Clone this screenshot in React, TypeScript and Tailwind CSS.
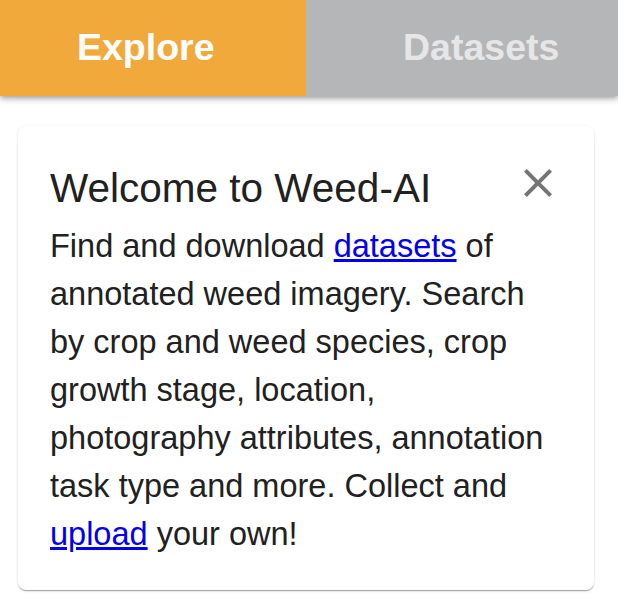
import React from "react";

const font = { fontFamily: '"Liberation Sans", Arial, sans-serif' };

function CloseIcon() {
  return (
    <svg viewBox="0 0 24 24" className="w-12 h-12" fill="#757575">
      <path d="M19 6.41 17.59 5 12 10.59 6.41 5 5 6.41 10.59 12 5 17.59 6.41 19 12 13.41 17.59 19 19 17.59 13.41 12z" />
    </svg>
  );
}

export default function App() {
  return (
    <div className="w-[618px] h-[612px] bg-white overflow-hidden" style={font}>
      {/* Tabs */}
      <div className="relative z-10 flex h-[96px] shadow-[0px_2px_4px_-1px_rgba(0,0,0,0.2),0px_4px_5px_0px_rgba(0,0,0,0.14),0px_1px_10px_0px_rgba(0,0,0,0.12)]">
        <div className="w-[306px] bg-[#f2a93c] flex items-center pl-[77px]">
          <span className="text-[37.5px] font-bold text-white leading-none">Explore</span>
        </div>
        <div className="flex-1 bg-[#b5b6b8] flex items-center pl-[97px]">
          <span className="text-[37.5px] font-bold text-[#e6e6e6] leading-none">Datasets</span>
        </div>
      </div>

      {/* Welcome card */}
      <div className="ml-[18px] w-[576px] mt-[30px] bg-white rounded-lg p-8 shadow-[0px_2px_1px_-1px_rgba(0,0,0,0.2),0px_1px_1px_0px_rgba(0,0,0,0.14),0px_1px_3px_0px_rgba(0,0,0,0.12)]">
        <div className="flex items-start justify-between mb-1">
          <h2 className="text-[40.5px] leading-[60px] text-[#212121]">Welcome to Weed-AI</h2>
          <button className="mt-px">
            <CloseIcon />
          </button>
        </div>
        <p className="text-[32.5px] leading-[48px] text-[#212121]">
          Find and download{" "}
          <a href="#" className="text-[#0000ee] underline">
            datasets
          </a>{" "}
          of annotated weed imagery. Search by crop and weed species, crop growth stage, location,
          photography attributes, annotation task type and more. Collect and{" "}
          <a href="#" className="text-[#0000ee] underline">
            upload
          </a>{" "}
          your own!
        </p>
      </div>
    </div>
  );
}
